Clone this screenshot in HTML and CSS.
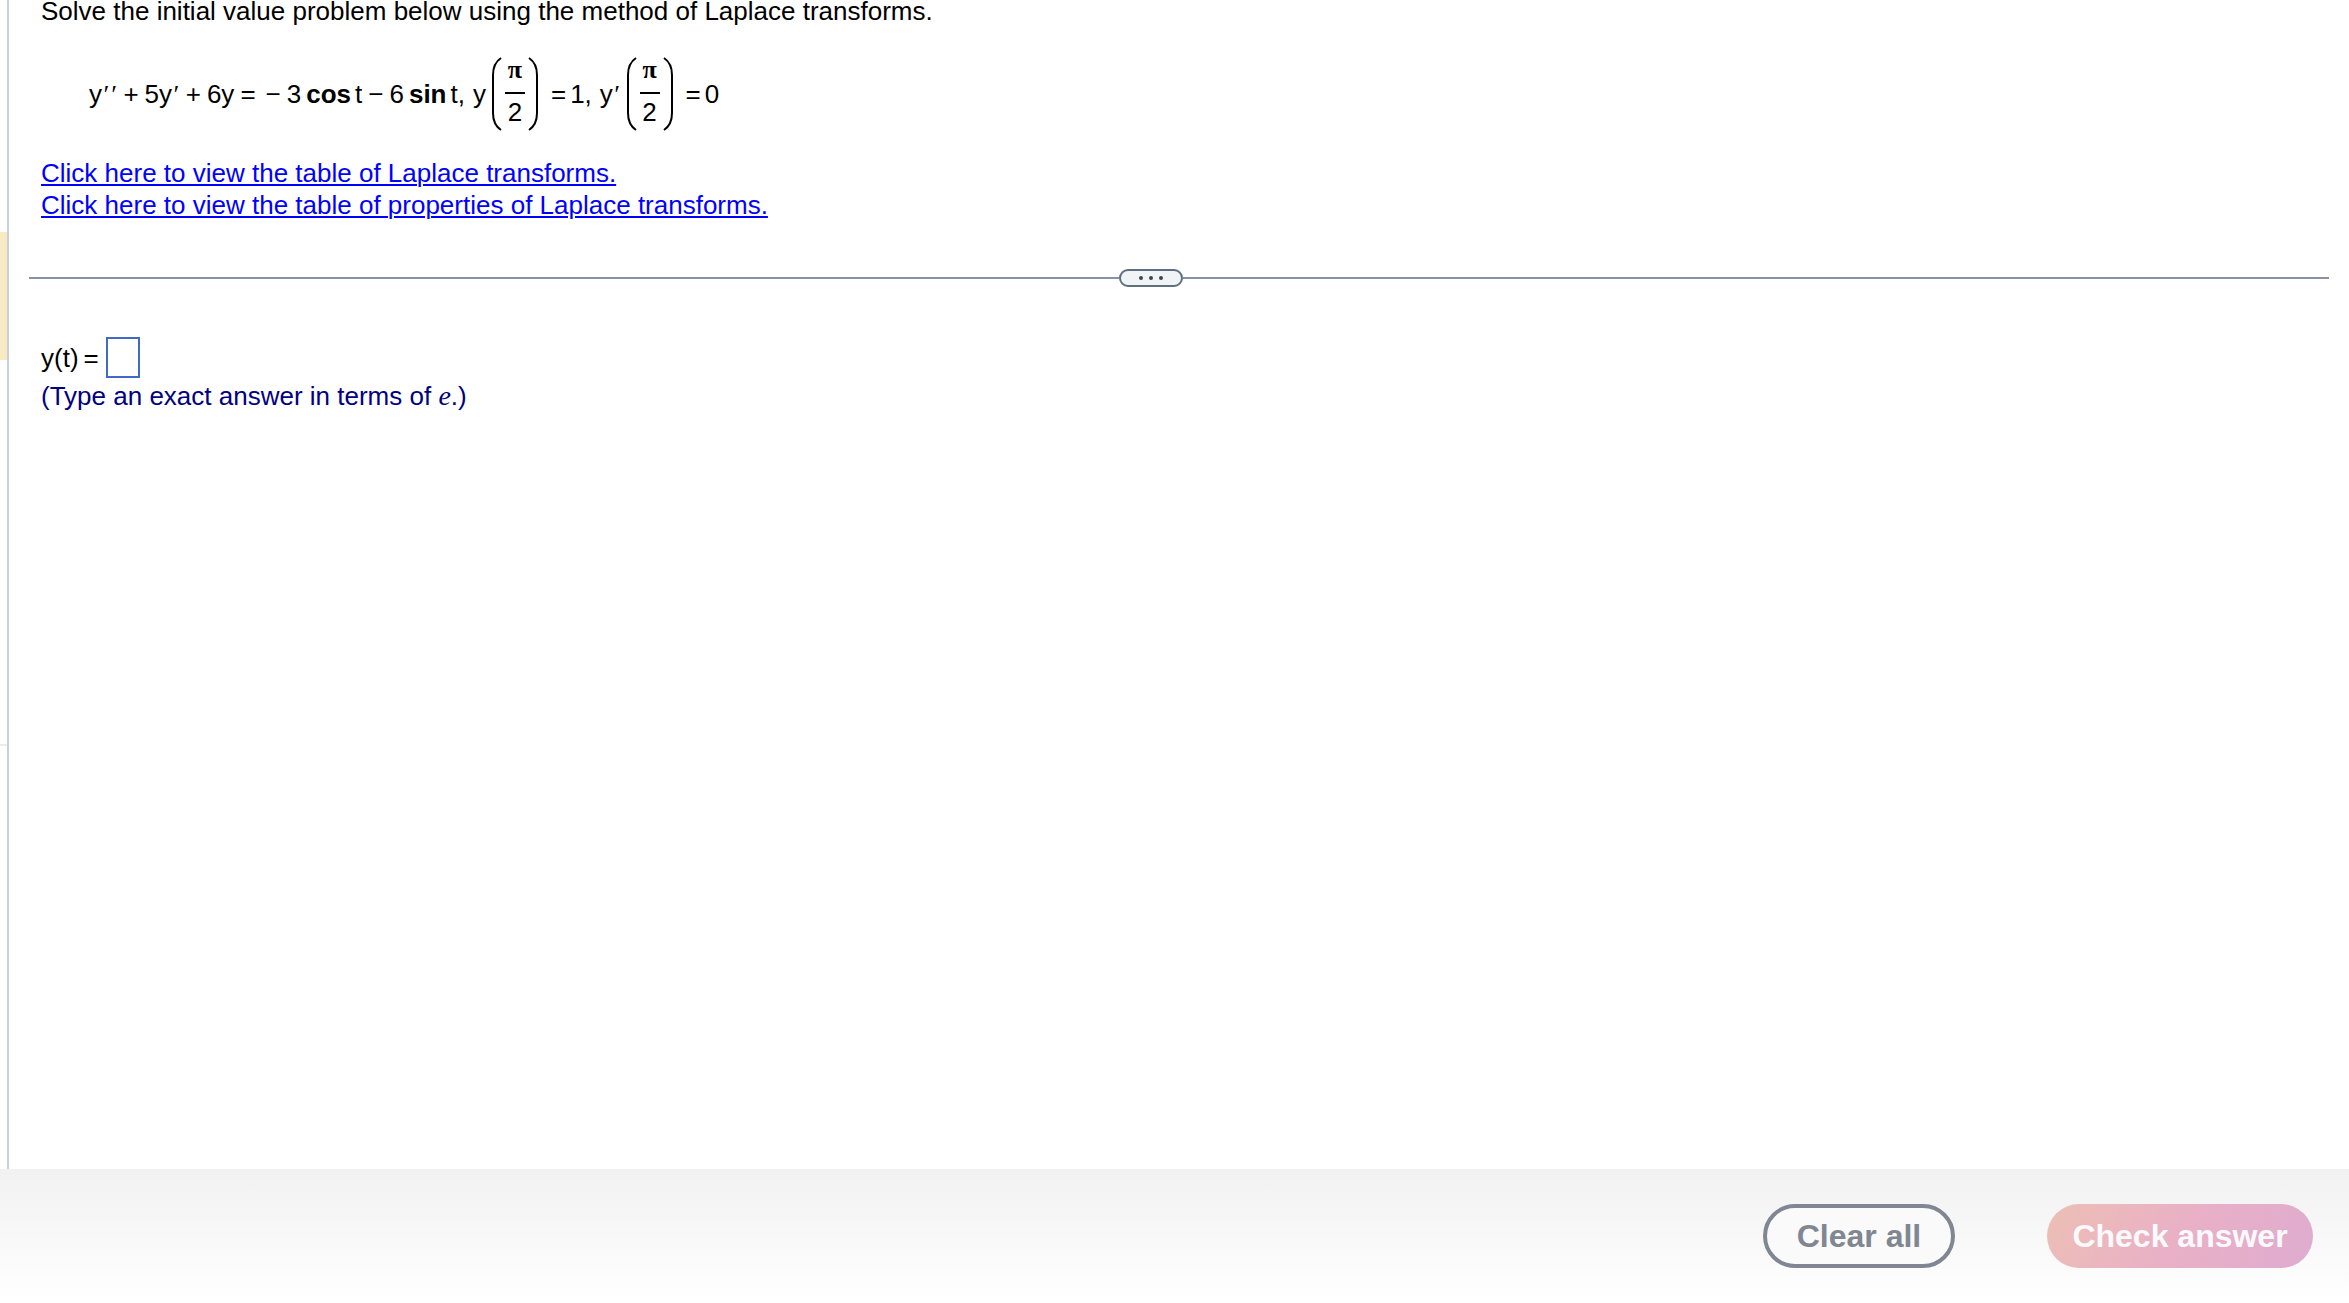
FILE: index.html
```html
<!DOCTYPE html>
<html lang="en">
<head>
<meta charset="utf-8">
<title>Laplace transforms exercise</title>
<link rel="stylesheet" href="styles.css">
</head>
<body>
<div class="workspace">
  <aside class="rail"><div class="rail-current"></div><div class="rail-line"></div></aside>
  <main class="exercise">
    <section class="question">
      <p class="prompt">Solve the initial value problem below using the method of Laplace transforms.</p>
      <div class="equation">
        <span>y<i class="prime">′</i><i class="prime">′</i></span><span class="op">+</span><span>5y<i class="prime">′</i></span><span class="op">+</span><span>6y</span><span class="op">=</span><span class="op neg">−</span><span>3</span><b>cos</b><span>t</span><span class="op">−</span><span>6</span><b>sin</b><span>t,</span>
        <span class="fn">y</span>
        <svg class="paren open" viewBox="0 0 10 74"><path d="M9 1C3 5 1 10 1 18V56C1 64 3 69 9 73"/></svg>
        <span class="frac"><span class="pi">π</span><span class="den">2</span></span>
        <svg class="paren" viewBox="0 0 10 74"><path d="M1 1C7 5 9 10 9 18V56C9 64 7 69 1 73"/></svg>
        <span class="op after">=</span><span>1,</span>
        <span class="fn">y<i class="prime">′</i></span>
        <svg class="paren open" viewBox="0 0 10 74"><path d="M9 1C3 5 1 10 1 18V56C1 64 3 69 9 73"/></svg>
        <span class="frac"><span class="pi">π</span><span class="den">2</span></span>
        <svg class="paren" viewBox="0 0 10 74"><path d="M1 1C7 5 9 10 9 18V56C9 64 7 69 1 73"/></svg>
        <span class="op after">=</span><span>0</span>
      </div>
      <div class="links">
        <a href="#transforms">Click here to view the table of Laplace transforms.</a>
        <a href="#properties">Click here to view the table of properties of Laplace transforms.</a>
      </div>
    </section>
    <div class="divider">
      <button class="handle" type="button" aria-label="Resize question area"><svg viewBox="0 0 24 4"><circle cx="2" cy="2" r="2"/><circle cx="12" cy="2" r="2"/><circle cx="22" cy="2" r="2"/></svg></button>
    </div>
    <section class="response">
      <div class="answer"><label for="answer"><span>y(t)</span><span>=</span></label><input id="answer" type="text" autocomplete="off"></div>
      <p class="hint">(Type an exact answer in terms of <em>e</em>.)</p>
    </section>
  </main>
</div>
<footer class="actions">
  <button class="btn clear" type="button">Clear all</button>
  <button class="btn check" type="button">Check answer</button>
</footer>
</body>
</html>
```
FILE: styles.css
```css
* { box-sizing: border-box; }
body {
  margin: 0;
  min-height: 100vh;
  display: flex;
  flex-direction: column;
  background: #fff;
  color: #000;
  font: 26px/32px "Liberation Sans", Arial, sans-serif;
}
p { margin: 0; }
.workspace { flex: 1; display: flex; }
.rail { width: 9px; border-right: 2px solid #cbcfdc; padding-top: 232px; }
.rail-current { height: 128px; background: #f8eac3; }
.rail-line { height: 2px; margin-top: 384px; background: #ececec; }
.exercise { flex: 1; padding: 0 20px; }
.question, .response { padding-left: 12px; }
.prompt { line-height: 22px; }

.equation { display: flex; align-items: center; height: 74px; margin: 35px 0 26px 48px; white-space: nowrap; }
.prime { margin-right: 2px; font-family: "Liberation Serif", serif; }
.op { margin: 0 6px; }
.neg { margin-left: 4px; }
.equation b { margin: 0 4px 0 5px; }
.fn { margin-left: 8px; }
.after { margin: 0 4px 0 10px; }
.paren { width: 10px; height: 74px; margin: 0 3px; fill: none; stroke: #000; stroke-width: 2; }
.open { margin-left: 6px; }
.frac { display: flex; flex-direction: column; width: 20px; text-align: center; }
.pi { padding-bottom: 12px; border-bottom: 2px solid #000; font-family: "Liberation Serif", serif; font-weight: bold; line-height: 20px; }
.den { padding-top: 2px; }

.links { display: flex; flex-direction: column; align-items: flex-start; }
.links a { color: #00f; text-decoration-thickness: 2px; text-underline-offset: 2px; }

.divider { display: flex; align-items: center; margin-top: 48px; }
.divider::before, .divider::after { content: ""; height: 2px; background: #8992a1; }
.divider::before { flex: 39; }
.divider::after { flex: 41; }
.handle { display: flex; align-items: center; justify-content: center; width: 64px; height: 18px; padding: 0; border: 2px solid #5f6f80; border-radius: 9px; background: #f1f4f6; }
.handle svg { width: 24px; height: 4px; fill: #444; }

.response { margin-top: 50px; }
.answer { display: flex; align-items: center; gap: 7px; }
.answer label { display: flex; gap: 5px; }
.answer input { width: 34px; height: 41px; padding: 2px; border: 2px solid #4169c8; border-radius: 0; background: #fff; font: inherit; }
.hint { margin-top: 2px; color: #000080; }
.hint em { font-family: "Liberation Serif", serif; font-size: 28px; line-height: 1; }

.actions { display: flex; justify-content: flex-end; gap: 92px; padding: 35px 36px; background: linear-gradient(#f1f1f1, #fff); }
.btn { height: 64px; border-radius: 32px; font: bold 32px/40px "Liberation Sans", Arial, sans-serif; }
.clear { width: 192px; padding: 0; border: 4px solid #808692; background: #fafafa; color: #808692; }
.check { width: 266px; padding: 0; border: 0; background: linear-gradient(120deg, #edbfb5, #e9b0c6 50%, #dfacd0); color: #fafafc; }
```
